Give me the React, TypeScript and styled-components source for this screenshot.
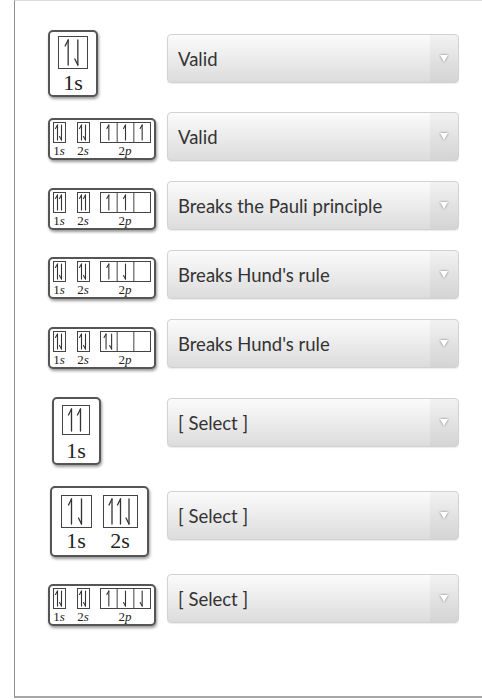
import React from 'react';
import styled, { createGlobalStyle } from 'styled-components';

const GlobalStyle = createGlobalStyle`
  html, body {
    margin: 0;
    padding: 0;
    background: #ffffff;
  }
  body {
    font-family: Lato, "Liberation Sans", sans-serif;
  }
`;

const Panel = styled.div`
  margin-left: 14px;
  height: 698px;
  box-sizing: border-box;
  border-left: 1px solid #8f8f8f;
  border-top: 1px solid #dcdcdc;
  border-bottom: 2px solid #a6a6a6;
  padding-top: 29px;
`;

const Row = styled.div<{ $h: number }>`
  display: flex;
  align-items: flex-start;
  height: ${p => p.$h}px;
`;

const ImageCell = styled.div<{ $left: number; $top: number }>`
  flex-shrink: 0;
  width: 152px;
  box-sizing: border-box;
  padding-left: ${p => p.$left}px;
  margin-top: ${p => p.$top}px;
`;

const Card = styled.div<{ $w: number; $h: number }>`
  width: ${p => p.$w}px;
  height: ${p => p.$h}px;
  box-sizing: border-box;
  border: 2px solid #555;
  border-radius: 5px;
  background: #fff;
  box-shadow: 1px 2px 3px rgba(0, 0, 0, 0.4);

  svg {
    display: block;
  }
`;

const Select = styled.div<{ $top: number }>`
  width: 292px;
  height: 49px;
  margin-top: ${p => p.$top}px;
  box-sizing: border-box;
  display: flex;
  align-items: center;
  border: 1px solid #d2d2d2;
  border-radius: 4px;
  background: linear-gradient(#fbfbfb, #dcdcdc);
  box-shadow: 0 1px 1px rgba(0, 0, 0, 0.08);
`;

const SelectText = styled.span`
  flex: 1;
  padding-left: 10px;
  font-size: 18.5px;
  color: #333;
  white-space: nowrap;
`;

const ArrowPart = styled.div`
  width: 28px;
  align-self: stretch;
  display: flex;
  align-items: center;
  justify-content: center;
  background: rgba(0, 0, 0, 0.035);
  border-radius: 0 3px 3px 0;
`;

const Caret = styled.span`
  width: 0;
  height: 0;
  border-left: 4.5px solid transparent;
  border-right: 4.5px solid transparent;
  border-top: 7px solid #fff;
  filter: drop-shadow(0 0 1px rgba(0, 0, 0, 0.5));
`;

type Box = { x: number; y: number; w: number; h: number; cells: string[] };
type Label = { x: number; y: number; size: number; num: string; letter: string; italic: boolean };
type Diagram = { w: number; h: number; boxes: Box[]; labels: Label[]; big: boolean };

// small 1s/2s/2p card
const small = (s1: string, s2: string, p: string[]): Diagram => ({
  w: 108,
  h: 42,
  big: false,
  boxes: [
    { x: 3, y: 2, w: 12, h: 20, cells: [s1] },
    { x: 27, y: 2, w: 12, h: 20, cells: [s2] },
    { x: 50, y: 2, w: 50, h: 20, cells: p },
  ],
  labels: [
    { x: 9, y: 34.5, size: 13, num: '1', letter: 's', italic: true },
    { x: 33, y: 34.5, size: 13, num: '2', letter: 's', italic: true },
    { x: 75, y: 34.5, size: 13, num: '2', letter: 'p', italic: true },
  ],
});

const Orbital: React.FC<{ d: Diagram }> = ({ d }) => {
  const iw = d.w - 4;
  const ih = d.h - 4;
  const barbW = d.big ? 3 : 2;
  const barbH = d.big ? 6 : 3.5;
  const items: React.ReactNode[] = [];

  d.boxes.forEach((b, bi) => {
    items.push(
      <rect key={`r${bi}`} x={b.x + 0.5} y={b.y + 0.5} width={b.w} height={b.h} fill="none" stroke="#444" strokeWidth={1} />
    );
    const cw = b.w / b.cells.length;
    b.cells.forEach((cell, ci) => {
      const cx = b.x + 0.5 + cw * ci;
      if (ci > 0) {
        items.push(<line key={`d${bi}-${ci}`} x1={cx} y1={b.y + 0.5} x2={cx} y2={b.y + b.h + 0.5} stroke="#444" strokeWidth={1} />);
      }
      const n = cell.length;
      const y1 = b.y + (d.big ? 4 : 3);
      const y2 = b.y + b.h - (d.big ? 3 : 2);
      cell.split('').forEach((a, ai) => {
        const x = cx + (cw * (ai + 1)) / (n + 1);
        const tip = a === 'u' ? y1 : y2;
        const dy = a === 'u' ? barbH : -barbH;
        items.push(
          <g key={`a${bi}-${ci}-${ai}`} stroke="#333" strokeWidth={d.big ? 1.3 : 1.1} fill="none" strokeLinecap="round">
            <line x1={x} y1={y1} x2={x} y2={y2} />
            <line x1={x} y1={tip} x2={x - barbW} y2={tip + dy} />
          </g>
        );
      });
    });
  });

  return (
    <Card $w={d.w} $h={d.h}>
      <svg width={iw} height={ih} viewBox={`0 0 ${iw} ${ih}`}>
        {items}
        {d.labels.map((l, i) => (
          <text
            key={`t${i}`}
            x={l.x}
            y={l.y}
            fontSize={l.size}
            textAnchor="middle"
            fill="#222"
            fontFamily='"Liberation Serif", "DejaVu Serif", serif'
          >
            {l.num}
            <tspan fontStyle={l.italic ? 'italic' : 'normal'}>{l.letter}</tspan>
          </text>
        ))}
      </svg>
    </Card>
  );
};

const rows: { h: number; left: number; imgTop: number; selTop: number; text: string; d: Diagram }[] = [
  {
    h: 82, left: 33, imgTop: 0, selTop: 4, text: 'Valid',
    d: {
      w: 50, h: 67, big: true,
      boxes: [{ x: 8, y: 4, w: 29, h: 32, cells: ['ud'] }],
      labels: [{ x: 23, y: 58, size: 22, num: '1', letter: 's', italic: false }],
    },
  },
  { h: 69, left: 33, imgTop: 6, selTop: 0, text: 'Valid', d: small('ud', 'ud', ['u', 'u', 'u']) },
  { h: 69, left: 33, imgTop: 7, selTop: 0, text: 'Breaks the Pauli principle', d: small('uu', 'uu', ['u', 'u', '']) },
  { h: 69, left: 33, imgTop: 7, selTop: 0, text: "Breaks Hund's rule", d: small('ud', 'ud', ['u', 'd', '']) },
  { h: 78, left: 33, imgTop: 8, selTop: 0, text: "Breaks Hund's rule", d: small('ud', 'ud', ['ud', '', '']) },
  {
    h: 89, left: 37, imgTop: 0, selTop: 1, text: '[ Select ]',
    d: {
      w: 49, h: 68, big: true,
      boxes: [{ x: 8, y: 6, w: 27, h: 29, cells: ['uu'] }],
      labels: [{ x: 22, y: 59, size: 22, num: '1', letter: 's', italic: false }],
    },
  },
  {
    h: 88, left: 35, imgTop: 0, selTop: 5, text: '[ Select ]',
    d: {
      w: 99, h: 71, big: true,
      boxes: [
        { x: 9, y: 7, w: 30, h: 32, cells: ['ud'] },
        { x: 51, y: 7, w: 34, h: 32, cells: ['uud'] },
      ],
      labels: [
        { x: 24, y: 60, size: 22, num: '1', letter: 's', italic: false },
        { x: 68, y: 60, size: 22, num: '2', letter: 's', italic: false },
      ],
    },
  },
  { h: 90, left: 33, imgTop: 10, selTop: 0, text: '[ Select ]', d: small('ud', 'ud', ['u', 'd', 'd']) },
];

export default function App() {
  return (
    <>
      <GlobalStyle />
      <Panel>
        {rows.map((r, i) => (
          <Row key={i} $h={r.h}>
            <ImageCell $left={r.left} $top={r.imgTop}>
              <Orbital d={r.d} />
            </ImageCell>
            <Select $top={r.selTop}>
              <SelectText>{r.text}</SelectText>
              <ArrowPart>
                <Caret />
              </ArrowPart>
            </Select>
          </Row>
        ))}
      </Panel>
    </>
  );
}
